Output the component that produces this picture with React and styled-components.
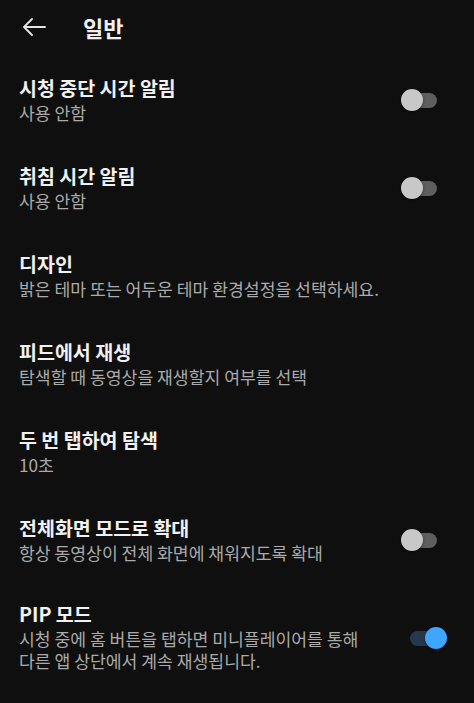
import React from "react";
import styled, { createGlobalStyle } from "styled-components";

const Global = createGlobalStyle`
  html, body { margin: 0; padding: 0; background: #0f0f0f; }
  body { font-family: "Noto Sans CJK KR", "Noto Sans", sans-serif; }
`;

const Page = styled.div`
  width: 474px;
  min-height: 703px;
  background: #0f0f0f;
  color: #f1f1f1;
  overflow: hidden;
`;

const Header = styled.header`
  height: 56px;
  display: flex;
  align-items: center;
  padding-left: 20px;
  box-sizing: border-box;
`;

const BackButton = styled.button`
  width: 28px;
  height: 28px;
  padding: 0;
  border: 0;
  background: none;
  display: flex;
  align-items: center;
  justify-content: center;
  margin-right: 35px;
  margin-top: -2px;
`;

const Title = styled.h1`
  margin: 0;
  font-size: 22px;
  font-weight: 700;
  line-height: 28px;
  margin-top: -2px;
`;

const List = styled.div`
  display: flex;
  flex-direction: column;
`;

const Item = styled.div`
  display: flex;
  align-items: center;
  justify-content: space-between;
  padding: 19px 27px 19px 19px;
  min-height: 50px;
`;

const Texts = styled.div`
  display: flex;
  flex-direction: column;
`;

const ItemTitle = styled.div`
  font-size: 19.5px;
  font-weight: 700;
  line-height: 26px;
  color: #f1f1f1;
  margin-top: ${(p) => (p.$multi ? "-2px" : "0")};
`;

const ItemSub = styled.div`
  font-size: 17.2px;
  line-height: ${(p) => (p.$multi ? "22px" : "24px")};
  margin-top: ${(p) => (p.$multi ? "1px" : "0")};
  color: #aaaaaa;
`;

const Switch = styled.div`
  position: relative;
  width: 46px;
  height: 24px;
  flex-shrink: 0;
  margin-left: 12px;
`;

const Track = styled.div`
  position: absolute;
  left: 9px;
  right: 10px;
  top: 5px;
  height: 15px;
  border-radius: 8px;
  background: ${(p) => (p.$on ? "#263850" : "#5e5e5e")};
`;

const Thumb = styled.div`
  position: absolute;
  top: 1px;
  width: 22px;
  height: 22px;
  border-radius: 50%;
  left: ${(p) => (p.$on ? "24px" : "0")};
  background: ${(p) => (p.$on ? "#3ea6ff" : "#c8c8c8")};
  box-shadow: 0 1px 3px rgba(0, 0, 0, 0.5);
`;

function Toggle({ on }) {
  return (
    <Switch $on={on}>
      <Track $on={on} />
      <Thumb $on={on} />
    </Switch>
  );
}

const items = [
  { title: "시청 중단 시간 알림", sub: ["사용 안함"], toggle: false },
  { title: "취침 시간 알림", sub: ["사용 안함"], toggle: false },
  { title: "디자인", sub: ["밝은 테마 또는 어두운 테마 환경설정을 선택하세요."] },
  { title: "피드에서 재생", sub: ["탐색할 때 동영상을 재생할지 여부를 선택"] },
  { title: "두 번 탭하여 탐색", sub: ["10초"] },
  { title: "전체화면 모드로 확대", sub: ["항상 동영상이 전체 화면에 채워지도록 확대"], toggle: false },
  {
    title: "PIP 모드",
    sub: ["시청 중에 홈 버튼을 탭하면 미니플레이어를 통해", "다른 앱 상단에서 계속 재생됩니다."],
    toggle: true,
  },
];

export default function App() {
  return (
    <Page>
      <Global />
      <Header>
        <BackButton aria-label="back">
          <svg width="26" height="20" viewBox="0 0 26 20" fill="none">
            <path d="M24 10H3M11 2L3 10l8 8" stroke="#e6e6e6" strokeWidth="1.8" strokeLinecap="round" strokeLinejoin="round" />
          </svg>
        </BackButton>
        <Title>일반</Title>
      </Header>
      <List>
        {items.map((it) => {
          const multi = it.sub.length > 1;
          return (
            <Item key={it.title}>
              <Texts>
                <ItemTitle $multi={multi}>{it.title}</ItemTitle>
                <ItemSub $multi={multi}>
                  {it.sub.map((s, i) => (
                    <React.Fragment key={s}>
                      {i > 0 && <br />}
                      {s}
                    </React.Fragment>
                  ))}
                </ItemSub>
              </Texts>
              {it.toggle !== undefined && <Toggle on={it.toggle} />}
            </Item>
          );
        })}
      </List>
    </Page>
  );
}
